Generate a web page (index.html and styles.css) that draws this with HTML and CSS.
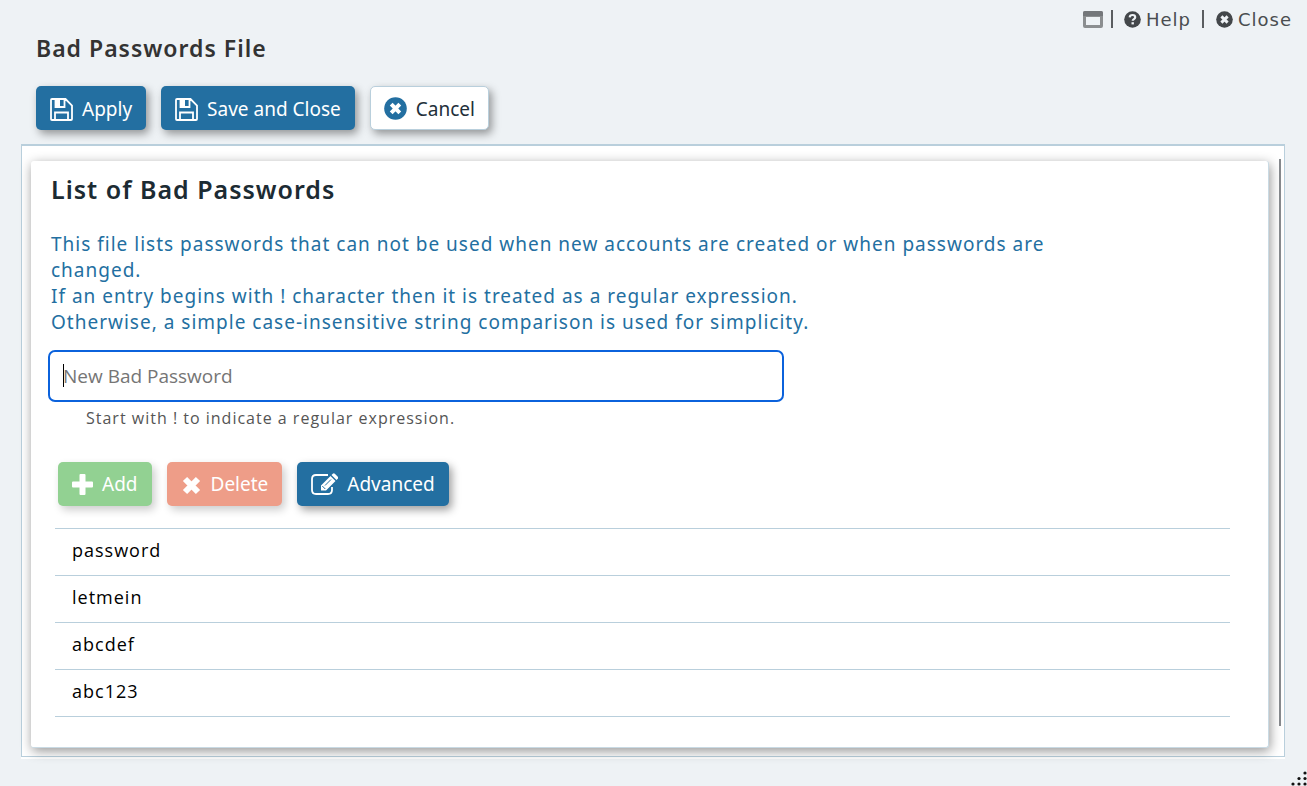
FILE: index.html
```html
<!DOCTYPE html>
<html lang="en">
<head>
  <meta charset="UTF-8">
  <meta name="viewport" content="width=device-width, initial-scale=1">
  <title>Bad Passwords File</title>
  <link rel="stylesheet" href="styles.css">
</head>
<body>
  <header class="page-header">
    <nav class="window-links">
      <a href="#" class="expand" aria-label="Maximize">
        <svg width="20" height="17" viewBox="0 0 20 17"><path fill="#8b8e90" fill-rule="evenodd" d="M2 0h16a2 2 0 0 1 2 2v13a2 2 0 0 1-2 2H2a2 2 0 0 1-2-2V2a2 2 0 0 1 2-2zm1 6v8h14V6z"/><path fill="#74777a" d="M2 0h16a2 2 0 0 1 2 2v3H0V2a2 2 0 0 1 2-2z"/></svg>
      </a>
      <span class="bar"></span>
      <a href="#">
        <svg width="17" height="17" viewBox="0 0 17 17"><circle cx="8.500" cy="8.500" r="8.300" fill="#43474a"/><path d="M5.700 6.300C6 3.200 11.200 3.200 11.200 6.300c0 1.900-2.500 1.700-2.500 3.500" fill="none" stroke="#eef2f5" stroke-width="2.200"/><path d="M7.500 11.200h2.400v2.200H7.500z" fill="#eef2f5"/></svg>
        Help
      </a>
      <span class="bar bar-wide"></span>
      <a href="#">
        <svg width="17" height="17" viewBox="0 0 17 17"><circle cx="8.500" cy="8.500" r="8.300" fill="#43474a"/><path d="M5.400 5.400l6.200 6.200m0-6.200l-6.200 6.200" stroke="#eef2f5" stroke-width="2.900"/></svg>
        Close
      </a>
    </nav>
    <h1>Bad Passwords File</h1>
    <div class="toolbar">
      <button class="btn primary" type="button">
        <svg width="23" height="23" viewBox="0 0 23 23" fill="none" stroke="#fff" stroke-width="1.800"><path d="M1 2q0-1 1-1h13.500L22 7.500V21q0 1-1 1H2q-1 0-1-1zM5 22v-7.500h13V22M5.500 1v8h9V1"/><path d="M6 1h4v8H6z" fill="#fff" stroke="none"/></svg>
        Apply
      </button>
      <button class="btn primary" type="button">
        <svg width="23" height="23" viewBox="0 0 23 23" fill="none" stroke="#fff" stroke-width="1.800"><path d="M1 2q0-1 1-1h13.500L22 7.500V21q0 1-1 1H2q-1 0-1-1zM5 22v-7.500h13V22M5.500 1v8h9V1"/><path d="M6 1h4v8H6z" fill="#fff" stroke="none"/></svg>
        Save and Close
      </button>
      <button class="btn cancel" type="button">
        <svg width="23" height="23" viewBox="0 0 23 23"><circle cx="11.500" cy="11.500" r="11.300" fill="#236fa1"/><path d="M7.200 7.200l8.600 8.600m0-8.600l-8.600 8.600" stroke="#fff" stroke-width="4"/></svg>
        Cancel
      </button>
    </div>
  </header>

  <main class="content">
    <section class="card">
      <h2>List of Bad Passwords</h2>
      <p class="intro">This file lists passwords that can not be used when new accounts are created or when passwords are changed.<br>
        If an entry begins with ! character then it is treated as a regular expression.<br>
        Otherwise, a simple case-insensitive string comparison is used for simplicity.</p>
      <div class="field">
        <input id="newPassword" type="text" placeholder="New Bad Password" aria-label="New Bad Password" aria-describedby="hint">
        <span class="caret"></span>
      </div>
      <p class="hint" id="hint">Start with ! to indicate a regular expression.</p>
      <div class="actions">
        <button class="btn add" type="button" disabled>
          <svg width="21" height="23" viewBox="0 0 21 23"><path fill="#fff" d="M8.500 1h4q1 0 1 1v6.500H20q1 0 1 1v4q0 1-1 1h-6.500V21q0 1-1 1h-4q-1 0-1-1v-6.500H1q-1 0-1-1v-4q0-1 1-1h6.500V2q0-1 1-1z"/></svg>
          Add
        </button>
        <button class="btn delete" type="button" disabled>
          <svg width="21" height="23" viewBox="0 0 21 23"><path d="M4 6l13 13M17 6L4 19" stroke="#fff" stroke-width="6"/></svg>
          Delete
        </button>
        <button class="btn primary" type="button">
          <svg width="27" height="23" viewBox="0 0 27 23"><path d="M17 2H5Q1 2 1 6v11q0 4 4 4h12q4 0 4-4v-3" fill="none" stroke="#fff" stroke-width="1.800"/><path d="M10 17.500v-5L19.500 3l5 5-9.500 9.500zM20.500 2l1.300-1.300q1-1 2 0l3 3q1 1 0 2L25.500 7z" fill="#fff"/><path d="M11.300 13l3 3M14 12.500L20 6.500" stroke="#236fa1" stroke-width="1"/></svg>
          Advanced
        </button>
      </div>
      <ul class="passwords">
        <li>password</li>
        <li>letmein</li>
        <li>abcdef</li>
        <li>abc123</li>
      </ul>
    </section>
    <div class="scrollbar"></div>
  </main>

  <svg class="grip" width="16" height="16" viewBox="0 0 16 16"><g fill="#111"><circle cx="14" cy="3" r="1.600"/><circle cx="8" cy="8.500" r="1.600"/><circle cx="14" cy="8.500" r="1.600"/><circle cx="2" cy="14" r="1.600"/><circle cx="8" cy="14" r="1.600"/><circle cx="14" cy="14" r="1.600"/></g></svg>
</body>
</html>
```
FILE: styles.css
```css
* { box-sizing: border-box; }

body {
  margin: 0;
  min-height: 100vh;
  display: flex;
  flex-direction: column;
  background: #eef2f5;
  color: #000;
  font-family: "Noto Sans", sans-serif;
  letter-spacing: 1px;
}

h1, h2, p, ul { margin: 0; padding: 0; }
svg { flex: none; }

/* Header */
.page-header { padding: 0 15px 0 36px; }

.window-links {
  display: flex;
  justify-content: flex-end;
  align-items: center;
  height: 38px;
  font-family: "DejaVu Sans", sans-serif;
  font-size: 18px;
}
.window-links a {
  display: flex;
  align-items: center;
  gap: 5px;
  color: #4a4d50;
  text-decoration: none;
}
.bar { width: 2px; height: 18px; margin: 0 11px 0 8px; background: #5a5d60; }
.bar-wide { margin: 0 12px 0 11px; }

h1 {
  height: 48px;
  line-height: 20px;
  font-size: 23px;
  font-weight: 600;
  color: #333;
}

.toolbar { display: flex; gap: 15px; padding-bottom: 14px; }

/* Buttons */
.btn {
  display: flex;
  align-items: center;
  gap: 9px;
  height: 44px;
  padding: 2px 14px 0;
  border: 0;
  border-radius: 5px;
  box-shadow: 3px 4px 8px rgba(0,0,0,0.38);
  color: #fff;
  font-family: "Noto Sans", sans-serif;
  font-size: 19px;
}
.primary { background: #236fa1; }
.cancel { padding: 1px 13px 0; border: 1px solid #b9cfdc; background: #fff; color: #222f3a; }
.add { background: #92d192; }
.delete { background: #ee9d88; }
.btn:disabled { box-shadow: 3px 4px 8px rgba(0,0,0,0.2); }

/* Content */
.content {
  flex: 1;
  display: flex;
  gap: 10px;
  margin: 0 22px 29px 21px;
  padding: 13px 3px 8px 9px;
  border: 1px solid #b9cfdc;
  border-top-width: 2px;
  background: #fff;
  box-shadow: 0 2px 0 #fff;
}

.card {
  flex: 1;
  margin-top: 2px;
  padding: 13px 38px 30px 20px;
  border: 1px solid #c9dae4;
  border-width: 0 1px 1px 0;
  border-radius: 3px;
  background: #fff;
  box-shadow: 1px 3px 12px rgba(0,0,0,0.42);
}

h2 { line-height: 30px; font-size: 25px; font-weight: 600; color: #1c2b33; }

.intro {
  max-width: 1040px;
  margin-top: 27px;
  line-height: 26px;
  font-size: 19px;
  color: #236fa1;
}

.field { position: relative; width: 736px; max-width: 100%; margin: 15px 0 0 -3px; }
.field input {
  display: block;
  width: 100%;
  height: 52px;
  padding: 0 13px;
  border: 2px solid #0b62dc;
  border-radius: 7px;
  outline: 0;
  background: #fff;
  font-family: "Open Sans", sans-serif;
  font-size: 19px;
}
.field input::placeholder { color: #757575; opacity: 1; }
.caret { position: absolute; left: 15px; top: 14px; width: 1px; height: 23px; background: #000; }

.hint {
  margin: 4px 0 0 35px;
  line-height: 24px;
  font-family: "Open Sans", sans-serif;
  font-size: 16px;
  color: #555;
}

.actions { display: flex; gap: 15px; margin: 32px 0 22px 7px; }
.actions .btn { padding-top: 0; }

.passwords {
  margin-left: 4px;
  border-top: 1px solid #b9cfdc;
  list-style: none;
  font-family: "Open Sans", sans-serif;
}
.passwords li {
  padding: 8px 17px 12px;
  border-bottom: 1px solid #b9cfdc;
  line-height: 26px;
  font-size: 18px;
}

.scrollbar { width: 2px; margin-bottom: 22px; background: #85888c; }

.grip { position: absolute; right: 0; bottom: 0; }
```
